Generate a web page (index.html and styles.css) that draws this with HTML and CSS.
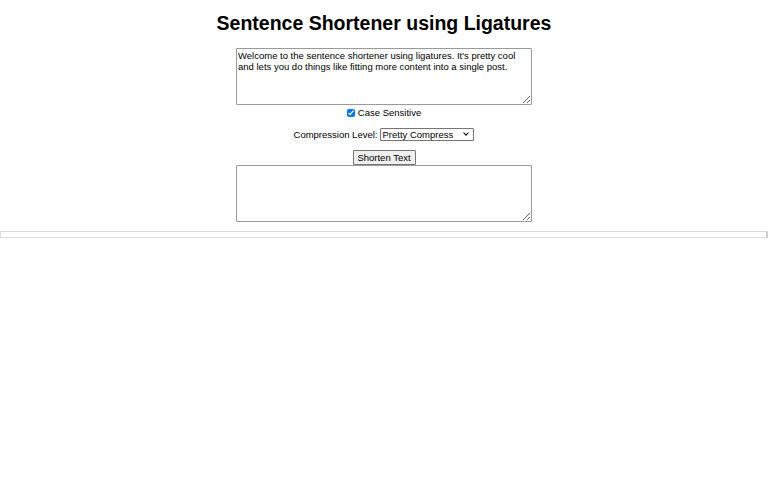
FILE: index.html
```html
<!DOCTYPE html>
<html>
<head>
<meta charset="utf-8">
<title>Sentence Shortener using Ligatures</title>
<link rel="stylesheet" href="styles.css">
</head>
<body>
<main class="app">
  <h1 class="title">Sentence Shortener using Ligatures</h1>
  <textarea class="box input-box">Welcome to the sentence shortener using ligatures. It's pretty cool and lets you do things like fitting more content into a single post.</textarea>
  <label class="row check-row"><input type="checkbox" class="check" checked>Case Sensitive</label>
  <label class="row level-row">Compression Level:
    <span class="select-wrap">
      <select class="level">
        <option>Pretty Compress</option>
      </select>
    </span>
  </label>
  <button class="shorten">Shorten Text</button>
  <textarea class="box output-box"></textarea>
</main>
<div class="result"></div>
</body>
</html>
```
FILE: styles.css
```css
html, body {
  margin: 0;
  padding: 0;
  background: #fff;
}

body {
  font-family: "Liberation Sans", Arial, sans-serif;
  color: #000;
}

.app {
  display: flex;
  flex-direction: column;
  align-items: center;
}

.title {
  font-size: 19.5px;
  font-weight: bold;
  margin: 12px 0 13px;
  line-height: 23px;
}

.box {
  box-sizing: border-box;
  width: 296px;
  height: 57px;
  margin: 0;
  padding: 1px 1px;
  font-family: "Liberation Sans", Arial, sans-serif;
  font-size: 9.5px;
  line-height: 11px;
  color: #000;
  border: 1px solid #9a9a9a;
  border-radius: 1px;
  resize: both;
}

.row {
  font-size: 9.5px;
  display: flex;
  align-items: center;
}

.check-row {
  margin-top: 2px;
  height: 11px;
}

.check {
  width: 8px;
  height: 8px;
  margin: 0 3px 0 0;
}

.level-row {
  margin-top: 9px;
  height: 14px;
  gap: 3px;
}

.select-wrap {
  position: relative;
  display: inline-flex;
}

.level {
  -webkit-appearance: none;
  appearance: none;
  font-family: "Liberation Sans", Arial, sans-serif;
  font-size: 9.5px;
  color: #000;
  width: 94px;
  height: 13px;
  padding: 0 1px;
  line-height: 11px;
  border: 1px solid #767676;
  border-radius: 1px;
  background: #fff;
}

/* small chevron drawn on the select's right side */
.select-wrap::after {
  content: "";
  position: absolute;
  right: 6px;
  top: 3px;
  width: 3px;
  height: 3px;
  border-right: 1.5px solid #000;
  border-bottom: 1.5px solid #000;
  transform: rotate(45deg);
  pointer-events: none;
}

.shorten {
  margin-top: 9px;
  font-family: "Liberation Sans", Arial, sans-serif;
  font-size: 9.5px;
  width: 63px;
  height: 15px;
  padding: 0;
  border: 1px solid #767676;
  border-radius: 1px;
  background: #efefef;
  color: #000;
}

.result {
  box-sizing: border-box;
  margin-top: 9px;
  width: 100%;
  height: 7px;
  border: 1px solid #dcdcdc;
  border-right: 2px solid #cfcfcf;
}
```
